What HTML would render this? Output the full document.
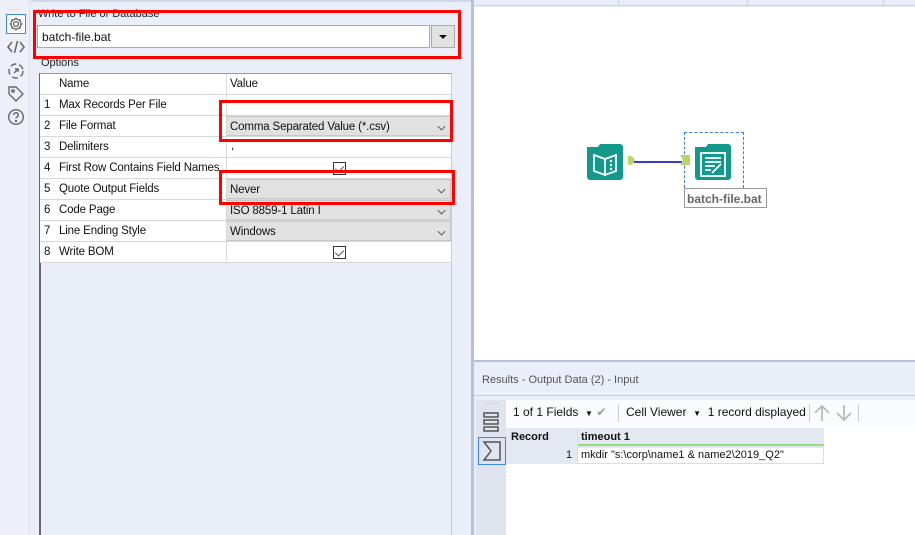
<!DOCTYPE html>
<html><head><style>
*{margin:0;padding:0;box-sizing:border-box}
html,body{width:915px;height:535px;overflow:hidden}
body{background:#e9eef8;font-family:"Liberation Sans",sans-serif;font-size:12px;color:#111;position:relative}
.a{position:absolute}
.row{position:absolute;left:40px;width:411px;height:21px;border-bottom:1px solid #d8d8d8;background:#fff;font-size:11.5px;letter-spacing:-0.15px}
.row .n{position:absolute;left:4px;top:4px}
.row .t{position:absolute;left:19px;top:4px;white-space:nowrap}
.row .v{position:absolute;left:186px;top:0;width:225px;height:20px;border-left:1px solid #d8d8d8}
.dd{background:#e1e1e1;border:1px solid #c8c8c8}
.dd span{position:absolute;left:3px;top:4px}
.chev{position:absolute;right:5px;top:6px;width:7px;height:7px;border-right:1px solid #444;border-bottom:1px solid #444;transform:rotate(45deg) scale(.8)}
.cb{position:absolute;left:106px;top:4px;width:13px;height:13px;border:1px solid #333;background:#fff}
.cb:after{content:"";position:absolute;left:3px;top:1px;width:4px;height:7px;border-right:1px solid #555;border-bottom:1px solid #555;transform:rotate(45deg)}
.red{position:absolute;border:3px solid #f00}
</style></head><body>
<div class="a" style="left:0;top:0;width:30px;height:535px;background:#edf0f8;border-right:1px solid #dde2ee"></div>
<div class="a" style="left:9px;top:5px;color:#999;font-size:8px;letter-spacing:1px">···</div>
<div class="a" style="left:6px;top:14px;width:20px;height:20px;border:1px solid #3d8be0;background:#fff"></div>
<svg class="a" style="left:7px;top:15px" width="18" height="18" viewBox="0 0 18 18" fill="none" stroke="#666" stroke-width="1.3"><circle cx="9" cy="9" r="2.5"/><path d="M9 2.5v2M9 13.5v2M2.5 9h2M13.5 9h2M4.4 4.4l1.4 1.4M12.2 12.2l1.4 1.4M4.4 13.6l1.4-1.4M12.2 5.8l1.4-1.4"/><circle cx="9" cy="9" r="5"/></svg>
<svg class="a" style="left:7px;top:39px" width="18" height="16" viewBox="0 0 18 16" fill="none" stroke="#666" stroke-width="1.5"><path d="M5 3L1 8l4 5M13 3l4 5-4 5M10.5 2l-3 12"/></svg>
<svg class="a" style="left:7px;top:62px" width="18" height="18" viewBox="0 0 18 18" fill="none" stroke="#666" stroke-width="1.4"><circle cx="9" cy="9" r="7" stroke-dasharray="6 3"/><path d="M7 11l4-4M8 7h3v3"/></svg>
<svg class="a" style="left:7px;top:85px" width="18" height="18" viewBox="0 0 18 18" fill="none" stroke="#666" stroke-width="1.4"><path d="M2 2h7l7 7-7 7-7-7z"/><circle cx="6" cy="6" r="1.2"/></svg>
<svg class="a" style="left:7px;top:108px" width="18" height="18" viewBox="0 0 18 18" fill="none" stroke="#666" stroke-width="1.4"><circle cx="9" cy="9" r="7.3"/><path d="M6.8 7a2.2 2.2 0 1 1 3 2c-.6.3-.8.7-.8 1.4"/><circle cx="9" cy="13" r=".5" fill="#666"/></svg>
<div class="a" style="left:31px;top:0;width:440px;height:2px;background:#d0d6e4"></div>
<div class="a" style="left:38px;top:8px;font-size:11px;color:#222">Write to File or Database</div>
<div class="a" style="left:37px;top:25px;width:393px;height:23px;background:#fff;border:1px solid #aaa"><span style="position:absolute;left:4px;top:4px;font-size:12px">batch-file.bat</span></div>
<div class="a" style="left:431px;top:25px;width:24px;height:23px;background:#e1e1e1;border:1px solid #aaa"></div>
<div class="a" style="left:439px;top:35px;width:0;height:0;border-left:4px solid transparent;border-right:4px solid transparent;border-top:4px solid #111"></div>
<div class="a" style="left:41px;top:57px;font-size:11px;color:#222">Options</div>
<div class="a" style="left:39px;top:73px;width:413px;height:462px;border-left:2px solid #666;border-top:1px solid #999;border-right:1px solid #ccc"></div>
<div class="row" style="top:74px;height:21px"><span class="t">Name</span><div class="v" style="border-left:1px solid #ddd"><span style="position:absolute;left:3px;top:4px">Value</span></div></div>
<div class="row" style="top:95px"><span class="n">1</span><span class="t">Max Records Per File</span><div class="v"></div></div>
<div class="row" style="top:116px"><span class="n">2</span><span class="t">File Format</span><div class="v dd"><span>Comma Separated Value (*.csv)</span><i class="chev"></i></div></div>
<div class="row" style="top:137px"><span class="n">3</span><span class="t">Delimiters</span><div class="v"><span style="position:absolute;left:4px;top:3px">,</span></div></div>
<div class="row" style="top:158px"><span class="n">4</span><span class="t">First Row Contains Field Names</span><div class="v" style="background:transparent"><i class="cb"></i></div></div>
<div class="row" style="top:179px"><span class="n">5</span><span class="t">Quote Output Fields</span><div class="v dd"><span>Never</span><i class="chev"></i></div></div>
<div class="row" style="top:200px"><span class="n">6</span><span class="t">Code Page</span><div class="v dd"><span>ISO 8859-1 Latin I</span><i class="chev"></i></div></div>
<div class="row" style="top:221px"><span class="n">7</span><span class="t">Line Ending Style</span><div class="v dd"><span>Windows</span><i class="chev"></i></div></div>
<div class="row" style="top:242px"><span class="n">8</span><span class="t">Write BOM</span><div class="v"><i class="cb"></i></div></div>
<div class="red" style="left:33px;top:10px;width:428px;height:49px"></div>
<div class="red" style="left:219px;top:100px;width:234px;height:42px"></div>
<div class="red" style="left:219px;top:170px;width:236px;height:35px"></div>
<div class="a" style="left:471px;top:0;width:3px;height:535px;background:#b4c2dd"></div>
<div class="a" style="left:474px;top:0;width:441px;height:6px;background:#e9eef8;border-bottom:1px solid #c8d2e6"></div>
<div class="a" style="left:618px;top:0;width:1px;height:6px;background:#c8d2e6"></div>
<div class="a" style="left:747px;top:0;width:1px;height:6px;background:#c8d2e6"></div>
<div class="a" style="left:883px;top:0;width:1px;height:6px;background:#c8d2e6"></div>
<div class="a" style="left:474px;top:7px;width:441px;height:353px;background:#fff"></div>
<svg class="a" style="left:586px;top:143px" width="50" height="40" viewBox="0 0 50 40"><path d="M1 4h11l2-3h20a3 3 0 0 1 3 3v30a3 3 0 0 1-3 3H4a3 3 0 0 1-3-3z" fill="#13998a"/><path d="M8 12l11 4v16l-11-4zM30 12l-11 4v16l11-4z" fill="none" stroke="#fff" stroke-width="1.8"/><circle cx="25" cy="18" r="1.2" fill="#fff"/><circle cx="25" cy="22" r="1.2" fill="#fff"/><circle cx="25" cy="26" r="1.2" fill="#fff"/><path d="M42 13h2a4 4 0 0 1 0 9h-2z" fill="#b7d66a"/></svg>
<div class="a" style="left:634px;top:161px;width:48px;height:2px;background:#3a3ad8"></div>
<div class="a" style="left:684px;top:132px;width:60px;height:56px;border:1px dashed #3b7fd4;border-bottom:none"></div>
<svg class="a" style="left:680px;top:143px" width="56" height="40" viewBox="0 0 56 40"><path d="M0 12h10v10H0l3-5z" fill="#b7d66a"/><path d="M15 4h11l2-3h20a3 3 0 0 1 3 3v30a3 3 0 0 1-3 3H18a3 3 0 0 1-3-3z" fill="#13998a"/><rect x="21" y="10" width="24" height="23" fill="none" stroke="#fff" stroke-width="1.8"/><path d="M25 15h16M25 19h16M25 23h10M25 27h6M32 30l9-9" stroke="#fff" stroke-width="1.8"/></svg>
<div class="a" style="left:684px;top:188px;width:83px;height:20px;border:1px solid #999;background:#fff;color:#666;font-size:12px;font-weight:bold;padding:3px 0 0 2px">batch-file.bat</div>
<div class="a" style="left:474px;top:360px;width:441px;height:175px;background:#e9eef8;border-top:2px solid #b4c2dd"></div>
<div class="a" style="left:474px;top:364px;width:441px;height:32px;border-bottom:1px solid #ccd"></div>
<div class="a" style="left:482px;top:374px;color:#555;font-size:11px">Results - Output Data (2) - Input</div>
<div class="a" style="left:476px;top:400px;width:30px;height:135px;background:#dfe4ee"></div>
<div class="a" style="left:484px;top:400px;color:#999;font-size:7px">······</div>
<svg class="a" style="left:482px;top:412px" width="18" height="20" viewBox="0 0 18 20" fill="none" stroke="#555" stroke-width="1.5"><rect x="2" y="1" width="14" height="4"/><rect x="2" y="8" width="14" height="4"/><rect x="2" y="15" width="14" height="4"/></svg>
<div class="a" style="left:478px;top:437px;width:28px;height:28px;border:1px solid #3d8be0;background:#dfe4ee"></div>
<svg class="a" style="left:482px;top:440px" width="20" height="22" viewBox="0 0 20 22" fill="none" stroke="#555" stroke-width="1.5"><path d="M2 2h16v18H2l7-9z"/></svg>
<div class="a" style="left:506px;top:400px;width:409px;height:28px;background:#fafbfd"></div>
<div class="a" style="left:513px;top:405px;font-size:12px">1 of 1 Fields &nbsp;<span style="font-size:8px">▼</span> <span style="color:#999">✔</span></div>
<div class="a" style="left:618px;top:404px;width:1px;height:18px;background:#ccc"></div>
<div class="a" style="left:626px;top:405px;font-size:12px">Cell Viewer &nbsp;<span style="font-size:8px">▼</span> &nbsp;1 record displayed</div>
<div class="a" style="left:809px;top:404px;width:1px;height:18px;background:#ccc"></div>
<svg class="a" style="left:813px;top:404px" width="40" height="18" viewBox="0 0 40 18" fill="none" stroke="#bbb" stroke-width="1.8"><path d="M9 17V2M2 9l7-7 7 7M31 1v15M24 9l7 7 7-7"/></svg>
<div class="a" style="left:858px;top:404px;width:1px;height:18px;background:#ccc"></div>
<div class="a" style="left:506px;top:428px;width:409px;height:107px;background:#fff"></div>
<div class="a" style="left:506px;top:428px;width:318px;height:20px;background:#e4e8f0"></div>
<div class="a" style="left:511px;top:431px;font-weight:bold;font-size:11px">Record</div>
<div class="a" style="left:577px;top:428px;width:1px;height:36px;background:#ddd"></div>
<div class="a" style="left:581px;top:431px;font-weight:bold;font-size:11px">timeout 1</div>
<div class="a" style="left:578px;top:444px;width:246px;height:2px;background:#8fe07a"></div>
<div class="a" style="left:506px;top:447px;width:71px;height:17px;background:#e4e8f0"></div>
<div class="a" style="left:566px;top:449px;font-size:11px">1</div>
<div class="a" style="left:578px;top:447px;width:246px;height:17px;border-bottom:1px solid #ddd;border-right:1px solid #ddd"></div>
<div class="a" style="left:581px;top:449px;font-size:11px">mkdir "s:\corp\name1 &amp; name2\2019_Q2"</div>
</body></html>
